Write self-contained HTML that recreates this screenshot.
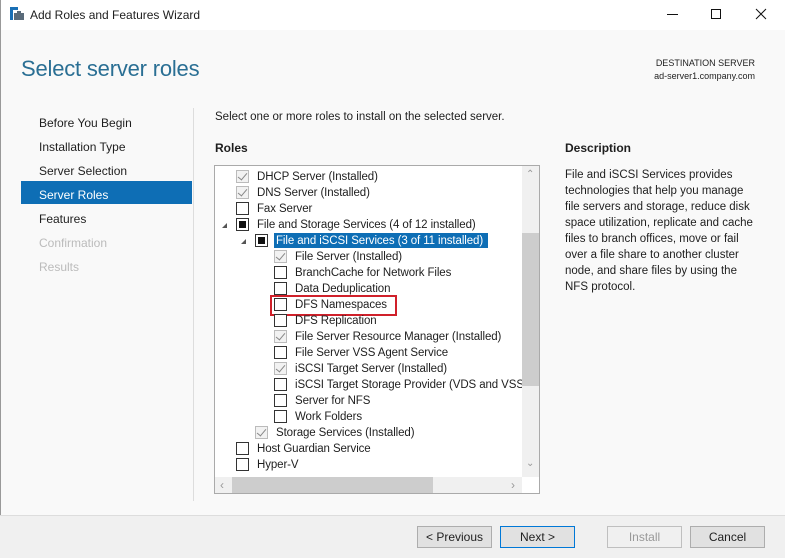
<!DOCTYPE html>
<html><head><meta charset="utf-8"><style>
*{margin:0;padding:0;box-sizing:border-box}
body{width:785px;height:558px;background:#f9f9f9;font-family:"Liberation Sans",sans-serif;font-size:12px;color:#1e1e1e;position:relative;overflow:hidden}
.a{position:absolute;white-space:nowrap}
.title{left:0;top:0;width:785px;height:30px;background:#fff}
.nav{left:39px;font-size:12px}
.cb{position:absolute;width:13px;height:13px;border:1px solid #333;background:#fff}
.cb.g{border-color:#bbb;background:#f2f2f2}
.cb.g:after{content:"";position:absolute;left:3px;top:0px;width:4px;height:8px;border:solid #888;border-width:0 1.5px 1.5px 0;transform:rotate(40deg)}
.cb.f:after{content:"";position:absolute;left:2px;top:2px;width:7px;height:7px;background:#111}
.row{position:absolute;height:16px;line-height:16px;font-size:11.5px;white-space:nowrap;letter-spacing:-0.1px;margin-top:1px}
.tri{position:absolute;width:0;height:0;border-left:5px solid transparent;border-bottom:5px solid #555}
.btn{position:absolute;top:526px;width:75px;height:22px;border:1px solid #adadad;background:#e1e1e1;text-align:center;line-height:20px;font-size:12px}
</style></head><body>
<div class="a title"></div>
<svg class="a" style="left:9px;top:6px" width="16" height="16"><rect x="1" y="1" width="3" height="13" fill="#1a6fb5"/><rect x="1" y="1" width="8" height="3" fill="#1a6fb5"/><rect x="5" y="7" width="10" height="7" fill="#5a6b7a"/><rect x="8" y="5" width="4" height="2" fill="#5a6b7a"/></svg>
<div class="a" style="left:30px;top:8px;font-size:12px">Add Roles and Features Wizard</div>
<div class="a" style="left:667px;top:14px;width:11px;border-top:1px solid #111"></div>
<div class="a" style="left:711px;top:9px;width:10px;height:10px;border:1px solid #111"></div>
<svg class="a" style="left:755px;top:8px" width="12" height="12"><path d="M1 1L11 11M11 1L1 11" stroke="#111" stroke-width="1"/></svg>
<div class="a" style="left:0;top:0;width:1px;height:558px;background:#999"></div>
<div class="a" style="left:21px;top:56px;font-size:22px;color:#2a6f94;letter-spacing:-0.2px">Select server roles</div>
<div class="a" style="right:30px;top:57px;font-size:9px;text-align:right;line-height:13px">DESTINATION SERVER<br>ad-server1.company.com</div>
<div class="a" style="left:193px;top:108px;width:1px;height:393px;background:#ddd"></div>
<div class="a nav" style="top:116px">Before You Begin</div>
<div class="a nav" style="top:140px">Installation Type</div>
<div class="a nav" style="top:164px">Server Selection</div>
<div class="a" style="left:21px;top:181px;width:171px;height:23px;background:#0e6eb5"></div>
<div class="a nav" style="top:188px;color:#fff">Server Roles</div>
<div class="a nav" style="top:212px">Features</div>
<div class="a nav" style="top:236px;color:#bbb">Confirmation</div>
<div class="a nav" style="top:260px;color:#bbb">Results</div>
<div class="a" style="left:215px;top:111px;font-size:11.5px">Select one or more roles to install on the selected server.</div>
<div class="a" style="left:215px;top:141px;font-weight:bold">Roles</div>
<div class="a" style="left:565px;top:141px;font-weight:bold">Description</div>
<div class="a" style="left:565px;top:167px;line-height:16px;white-space:normal;width:192px;font-size:11.5px">File and iSCSI Services provides technologies that help you manage file servers and storage, reduce disk space utilization, replicate and cache files to branch offices, move or fail over a file share to another cluster node, and share files by using the NFS protocol.</div>
<div class="a" style="left:214px;top:165px;width:326px;height:329px;border:1px solid #aaa;background:#fff;overflow:hidden">
 <div class="a" style="left:307px;top:0;width:17px;height:311px;background:#f0f0f0"></div>
 <div class="a" style="left:307px;top:67px;width:17px;height:153px;background:#cdcdcd"></div>
 <div class="a" style="left:311px;top:3px;color:#999;font-size:10px">&#8963;</div>
 <div class="a" style="left:311px;top:292px;color:#999;font-size:10px">&#8964;</div>
 <div class="a" style="left:0;top:311px;width:307px;height:17px;background:#f0f0f0"></div>
 <div class="a" style="left:17px;top:311px;width:201px;height:17px;background:#cdcdcd"></div>
 <div class="a" style="left:5px;top:312px;color:#999">&lsaquo;</div>
 <div class="a" style="left:296px;top:312px;color:#999">&rsaquo;</div>
</div>
<div class="a" style="left:274px;top:233px;width:214px;height:15px;background:#0e6eb5"></div>
<div class="cb g" style="left:236px;top:170px"></div><div class="row" style="left:257px;top:168px">DHCP Server (Installed)</div>
<div class="cb g" style="left:236px;top:186px"></div><div class="row" style="left:257px;top:184px">DNS Server (Installed)</div>
<div class="cb" style="left:236px;top:202px"></div><div class="row" style="left:257px;top:200px">Fax Server</div>
<div class="tri" style="left:222px;top:223px"></div>
<div class="cb f" style="left:236px;top:218px"></div><div class="row" style="left:257px;top:216px">File and Storage Services (4 of 12 installed)</div>
<div class="tri" style="left:241px;top:239px"></div>
<div class="cb f" style="left:255px;top:234px"></div><div class="row" style="left:276px;top:232px;color:#fff;width:212px;overflow:hidden">File and iSCSI Services (3 of 11 installed)</div>
<div class="cb g" style="left:274px;top:250px"></div><div class="row" style="left:295px;top:248px">File Server (Installed)</div>
<div class="cb" style="left:274px;top:266px"></div><div class="row" style="left:295px;top:264px">BranchCache for Network Files</div>
<div class="cb" style="left:274px;top:282px"></div><div class="row" style="left:295px;top:280px">Data Deduplication</div>
<div class="cb" style="left:274px;top:298px"></div><div class="row" style="left:295px;top:296px">DFS Namespaces</div>
<div class="a" style="left:270px;top:295px;width:127px;height:21px;border:2px solid #d0202a"></div>
<div class="cb" style="left:274px;top:314px"></div><div class="row" style="left:295px;top:312px">DFS Replication</div>
<div class="cb g" style="left:274px;top:330px"></div><div class="row" style="left:295px;top:328px">File Server Resource Manager (Installed)</div>
<div class="cb" style="left:274px;top:346px"></div><div class="row" style="left:295px;top:344px">File Server VSS Agent Service</div>
<div class="cb g" style="left:274px;top:362px"></div><div class="row" style="left:295px;top:360px">iSCSI Target Server (Installed)</div>
<div class="cb" style="left:274px;top:378px"></div><div class="row" style="left:295px;top:376px;width:227px;overflow:hidden">iSCSI Target Storage Provider (VDS and VSS</div>
<div class="cb" style="left:274px;top:394px"></div><div class="row" style="left:295px;top:392px">Server for NFS</div>
<div class="cb" style="left:274px;top:410px"></div><div class="row" style="left:295px;top:408px">Work Folders</div>
<div class="cb g" style="left:255px;top:426px"></div><div class="row" style="left:276px;top:424px">Storage Services (Installed)</div>
<div class="cb" style="left:236px;top:442px"></div><div class="row" style="left:257px;top:440px">Host Guardian Service</div>
<div class="cb" style="left:236px;top:458px"></div><div class="row" style="left:257px;top:456px">Hyper-V</div>
<div class="a" style="left:0;top:515px;width:785px;height:43px;background:#f0f0f0;border-top:1px solid #ddd"></div>
<div class="btn" style="left:417px">&lt; Previous</div>
<div class="btn" style="left:500px;border-color:#0078d7">Next &gt;</div>
<div class="btn" style="left:607px;background:#f0f0f0;border-color:#bfbfbf;color:#999">Install</div>
<div class="btn" style="left:690px">Cancel</div>
</body></html>
